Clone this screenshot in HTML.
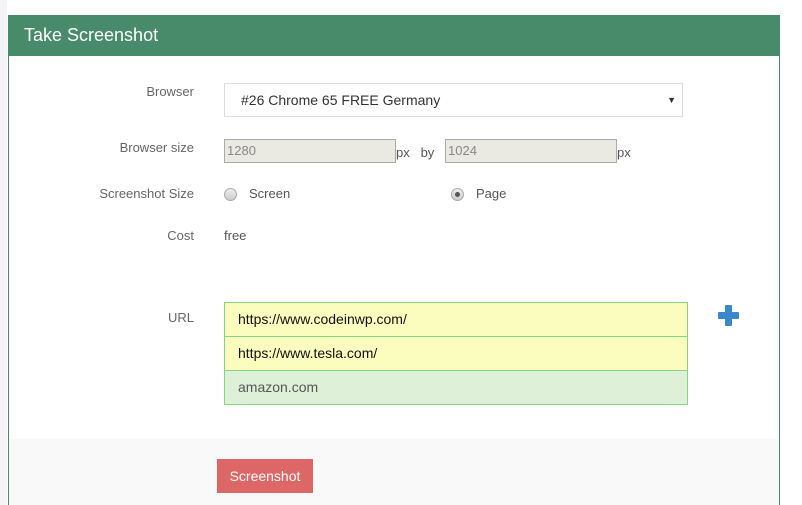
<!DOCTYPE html>
<html><head><style>
html,body{margin:0;width:802px;height:505px;overflow:hidden}
body{background:#fff;font-family:"Liberation Sans",sans-serif;position:relative}
.a{position:absolute}
.side{left:0;top:0;width:7px;height:505px;background:#f4f4f6}
.panel{left:8px;top:15px;width:770px;height:490px;border-left:1px solid #488b6b;border-right:1px solid #488b6b;background:#fff}
.hd{left:8px;top:15px;width:772px;height:41px;background:#488b6b;color:#fff;font-size:18px;line-height:41px;text-indent:16px}
.lbl{color:#666;font-size:13px;text-align:right;width:194px;left:0}
.txt{color:#555;font-size:13px}
.sel{left:224px;top:83px;width:457px;height:32px;border:1px solid #ddd;font-size:14px;color:#333;line-height:32px;text-indent:16px}
.num{height:22px;width:170px;background:#eae9e2;border:1px solid #aaa;color:#888;font-size:13px;line-height:22px;text-indent:2px;top:139px}
.rad{width:11px;height:11px;border:1px solid #aaa;border-radius:50%;background:linear-gradient(#eee,#ccc);top:188px}
.url{left:224px;width:462px;height:33px;border:1px solid #80d880;font-size:14px;line-height:33px;text-indent:13px}
.ft{left:9px;top:439px;width:769px;height:66px;background:#f9f9f9}
.btn{left:217px;top:459px;width:96px;height:34px;background:#dd6666;color:#fff;font-size:14px;line-height:34px;text-align:center}
</style></head><body>
<div class="a side"></div>
<div class="a panel"></div>
<div class="a hd">Take Screenshot</div>
<div class="a lbl" style="top:84px">Browser</div>
<div class="a sel">#26 Chrome 65 FREE Germany<span class="a" style="right:6px;top:0;font-size:9px;text-indent:0">▼</span></div>
<div class="a lbl" style="top:140px">Browser size</div>
<div class="a num" style="left:224px">1280</div>
<div class="a txt" style="left:396px;top:145px">px &nbsp; by</div>
<div class="a num" style="left:445px">1024</div>
<div class="a txt" style="left:617px;top:145px">px</div>
<div class="a lbl" style="top:186px">Screenshot Size</div>
<div class="a rad" style="left:224px"></div>
<div class="a txt" style="left:249px;top:186px">Screen</div>
<div class="a rad" style="left:451px"><div class="a" style="left:3px;top:3px;width:5px;height:5px;border-radius:50%;background:#555"></div></div>
<div class="a txt" style="left:476px;top:186px">Page</div>
<div class="a lbl" style="top:228px">Cost</div>
<div class="a txt" style="left:224px;top:228px">free</div>
<div class="a lbl" style="top:310px">URL</div>
<div class="a url" style="top:302px;background:#fafdbd;color:#111">https://www.codeinwp.com/</div>
<div class="a url" style="top:336px;background:#fafdbd;color:#111">https://www.tesla.com/</div>
<div class="a url" style="top:370px;background:#dff0d8;color:#555">amazon.com</div>
<div class="a" style="left:718px;top:312px;width:21px;height:7px;background:#3a88cc;border-radius:1px"></div>
<div class="a" style="left:725px;top:305px;width:7px;height:21px;background:#3a88cc;border-radius:1px"></div>
<div class="a ft"></div>
<div class="a btn">Screenshot</div>
</body></html>
